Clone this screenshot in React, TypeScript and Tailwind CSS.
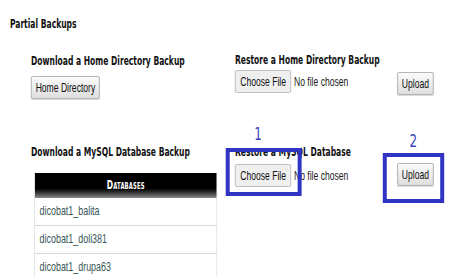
import React from "react";

const btn =
  "h-[23px] px-[6px] border border-[#a6a6a6] rounded-[2px] bg-gradient-to-b from-[#fbfbfb] to-[#dedede] text-[13px] leading-[20px] text-[#111] font-['Liberation_Sans',Arial,sans-serif] shadow-[0_1px_1px_rgba(0,0,0,0.15)]";
const fileBtn =
  "h-[23px] px-[7px] border border-[#b5b5b5] rounded-[2px] bg-[#efefef] text-[13px] leading-[20px] text-[#111] font-['Liberation_Sans',Arial,sans-serif]";
const heading =
  "text-[11.5px] leading-[13px] font-bold text-[#111] font-['DejaVu_Sans',Verdana,sans-serif]";

function FileInput({ top }: { top: string }) {
  return (
    <div className={`flex items-center ${top}`}>
      <button className={fileBtn}>Choose File</button>
      <span className="ml-[4px] text-[13px] leading-[20px] text-[#222] font-['Liberation_Sans',Arial,sans-serif]">
        No file chosen
      </span>
    </div>
  );
}

export default function App() {
  const dbs = ["dicobat1_balita", "dicobat1_doli381", "dicobat1_drupa63"];
  return (
    <div className="w-[474px] h-[277px] overflow-hidden bg-white relative">
      <div className="w-[718px] h-[277px] origin-top-left scale-x-[0.66] relative">
        <div className="pl-[15px] pt-[18px] text-[11.5px] leading-[13px] font-bold text-[#111] font-['DejaVu_Sans',Verdana,sans-serif]">
          Partial Backups
        </div>

        {/* Section 1 */}
        <div className="flex mt-[24px] pl-[47px]">
          <div className="w-[309px] flex flex-col items-start">
            <h3 className={heading}>Download a Home Directory Backup</h3>
            <button className={`${btn} mt-[8px] h-[22px]`}>Home Directory</button>
          </div>
          <div className="flex flex-col items-start -mt-[1px]">
            <h3 className={heading}>Restore a Home Directory Backup</h3>
            <div className="flex items-start">
              <FileInput top="mt-[3px]" />
              <button className={`${btn} ml-[74px] mt-[5px] px-[4px]`}>Upload</button>
            </div>
          </div>
        </div>

        {/* Section 2 */}
        <div className="flex mt-[47px] pl-[47px]">
          <div className="w-[309px] flex flex-col items-start">
            <h3 className={heading}>Download a MySQL Database Backup</h3>
            <div className="mt-[14px] ml-[5px] w-[277px] border-x border-[#d8d8d8]">
              <div className="h-[25px] bg-gradient-to-b from-black via-black via-[55%] to-[#8c8c8c] flex items-center justify-center text-white font-bold text-[11.5px] font-['DejaVu_Sans',Verdana,sans-serif] [font-variant:small-caps] tracking-[0.2px]">
                Databases
              </div>
              {dbs.map((d) => (
                <div
                  key={d}
                  className="h-[28px] border-b border-[#d8d8d8] flex items-center pl-[7px] text-[13.5px] text-[#365656] font-['Liberation_Sans',Arial,sans-serif]"
                >
                  {d}
                </div>
              ))}
            </div>
          </div>
          <div className="flex flex-col items-start">
            <h3 className={heading}>Restore a MySQL Database</h3>
            <div className="flex items-start">
              <FileInput top="mt-[5px]" />
              <button className={`${btn} ml-[74px] mt-[4px] px-[4px]`}>Upload</button>
            </div>
          </div>
        </div>

        {/* Annotations */}
        <div className="absolute left-[342px] top-[140px] w-[115px] h-[8px] bg-white" />
        <div className="absolute left-[342px] top-[148px] w-[115px] h-[48px] border-x-[6px] border-y-[4px] border-[#3034c2]" />
        <div className="absolute left-[380px] top-[124px] w-[22px] text-center text-[18px] leading-[20px] font-medium text-[#3a46b8] font-['DejaVu_Sans',sans-serif]">
          1
        </div>
        <div className="absolute left-[580px] top-[153px] w-[93px] h-[50px] border-x-[6px] border-y-[4px] border-[#3034c2]" />
        <div className="absolute left-[615px] top-[131px] w-[22px] text-center text-[18px] leading-[20px] font-medium text-[#3a46b8] font-['DejaVu_Sans',sans-serif]">
          2
        </div>
      </div>
    </div>
  );
}
